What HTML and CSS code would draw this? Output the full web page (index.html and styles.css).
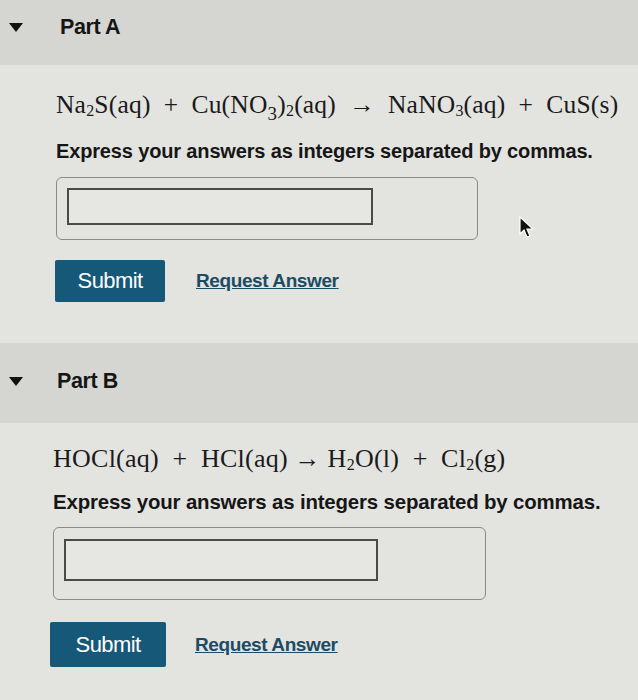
FILE: index.html
```html
<!DOCTYPE html>
<html>
<head>
<meta charset="utf-8">
<link rel="stylesheet" href="styles.css">
</head>
<body>
<section class="part part-a">
  <div class="part-head">
    <svg class="caret" width="14" height="9" viewBox="0 0 14 9"><path d="M0 0 L14 0 L7 9 Z" fill="#111"/></svg>
    <span class="part-title">Part A</span>
  </div>
  <div class="part-body">
    <div class="eq">Na<sub>2</sub>S(aq) &nbsp;+&nbsp; Cu(NO<sub class="low">3</sub>)<sub>2</sub>(aq) &nbsp;→&nbsp; NaNO<sub>3</sub>(aq) &nbsp;+&nbsp; CuS(s)</div>
    <p class="instr">Express your answers as integers separated by commas.</p>
    <div class="answer-box"><div class="answer-input"></div></div>
    <div class="actions">
      <button class="submit">Submit</button>
      <a class="request" href="#">Request Answer</a>
    </div>
  </div>
</section>
<section class="part part-b">
  <div class="part-head">
    <svg class="caret" width="14" height="9" viewBox="0 0 14 9"><path d="M0 0 L14 0 L7 9 Z" fill="#111"/></svg>
    <span class="part-title">Part B</span>
  </div>
  <div class="part-body">
    <div class="eq">HOCl(aq) &nbsp;+&nbsp; HCl(aq) → H<sub>2</sub>O(l) &nbsp;+&nbsp; Cl<sub>2</sub>(g)</div>
    <p class="instr">Express your answers as integers separated by commas.</p>
    <div class="answer-box"><div class="answer-input"></div></div>
    <div class="actions">
      <button class="submit">Submit</button>
      <a class="request" href="#">Request Answer</a>
    </div>
  </div>
</section>
<svg class="cursor" width="20" height="24" viewBox="0 0 20 24"><path d="M2 1 L2 18 L6 14 L9 21 L12 20 L9 13 L15 13 Z" fill="#111" stroke="#fff" stroke-width="1.2"/></svg>
</body>
</html>
```
FILE: styles.css
```css
html, body {
  margin: 0;
  padding: 0;
}
body {
  width: 638px;
  height: 700px;
  overflow: hidden;
  background: #e3e3e0;
  font-family: "Liberation Sans", Arial, sans-serif;
  color: #161616;
  position: relative;
}
.part-head {
  display: flex;
  align-items: center;
  background: #d5d5d2;
}
.part-a .part-head {
  height: 65px;
  padding-bottom: 10px;
  box-sizing: border-box;
}
.part-b .part-head {
  height: 80px;
  padding-bottom: 4px;
  box-sizing: border-box;
}
.caret {
  margin-left: 9px;
  width: 14px;
  flex: none;
}
.part-title {
  font-weight: bold;
  font-size: 21.5px;
  margin-left: 37px;
  letter-spacing: -0.4px;
}
.part-b .part-title {
  margin-left: 34px;
}
.part-body {
  padding-left: 56px;
}
.part-a .part-body {
  padding-top: 22px;
  height: 256px;
}
.part-b .part-body {
  padding-left: 53px;
  padding-top: 18px;
}
.eq {
  font-family: "Liberation Serif", "Times New Roman", serif;
  font-size: 25.5px;
  line-height: 36px;
  color: #1a1a1a;
  white-space: nowrap;
  letter-spacing: 0.2px;
}
.part-b .eq {
  font-size: 26px;
  letter-spacing: 0.25px;
}
.eq sub {
  font-size: 16px;
  vertical-align: -3px;
  line-height: 0;
}
.eq sub.low {
  font-size: 19px;
  vertical-align: -7px;
}
.instr {
  margin: 15px 0 0;
  font-weight: bold;
  font-size: 20px;
  line-height: 26px;
  letter-spacing: -0.15px;
}
.part-b .instr {
  margin-top: 12px;
  font-size: 20.4px;
  letter-spacing: -0.15px;
}
.answer-box {
  margin-top: 13px;
  width: 422px;
  height: 63px;
  box-sizing: border-box;
  border: 1.5px solid #8a8a88;
  border-radius: 6px;
  padding: 10px 0 0 10px;
}
.part-b .answer-box {
  width: 433px;
  height: 73px;
  padding-top: 11px;
  margin-top: 12px;
}
.answer-input {
  width: 306px;
  height: 37px;
  box-sizing: border-box;
  border: 2px solid #4a4a4a;
  background: #e6e6e3;
}
.part-b .answer-input {
  width: 314px;
  height: 42px;
}
.actions {
  display: flex;
  align-items: center;
  margin-top: 20px;
}
.part-b .actions {
  margin-top: 22px;
}
.submit {
  width: 110px;
  height: 42px;
  background: #155878;
  color: #fff;
  border: none;
  border-radius: 2px;
  font-family: "Liberation Sans", Arial, sans-serif;
  font-size: 22px;
  letter-spacing: -0.6px;
  padding: 0;
  margin-left: -1px;
}
.part-b .submit {
  width: 116px;
  height: 45px;
  margin-left: -3px;
}
.request {
  margin-left: 31px;
  color: #1c4b64;
  font-weight: bold;
  font-size: 19px;
  letter-spacing: -0.4px;
  text-decoration: underline;
}
.part-b .request {
  margin-left: 29px;
}
.cursor {
  position: absolute;
  left: 518px;
  top: 216px;
}
```
